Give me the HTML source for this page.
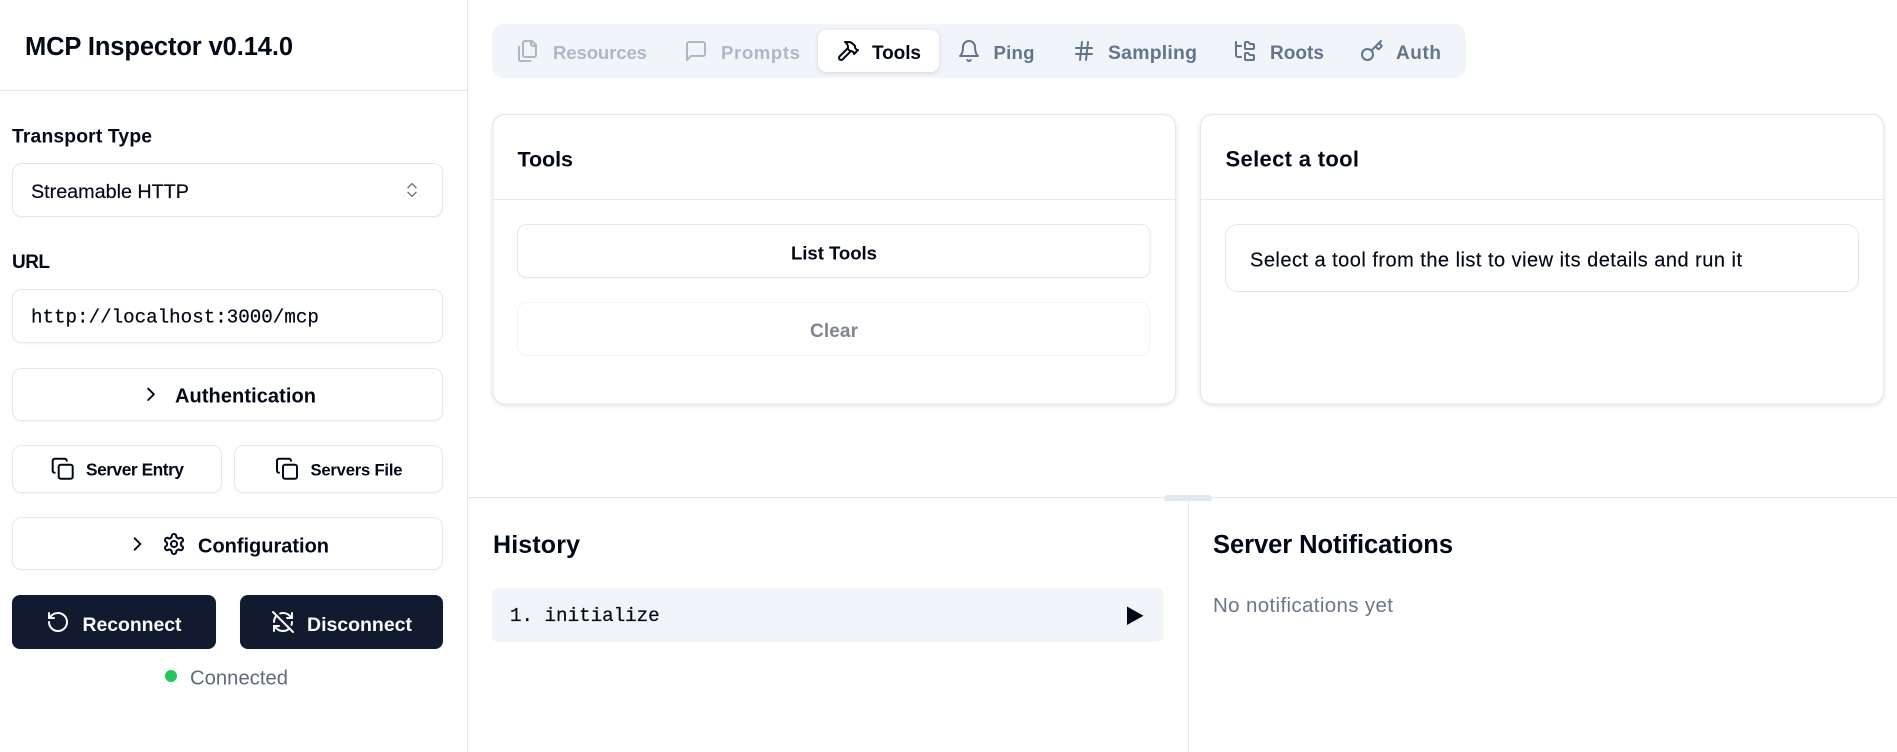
<!DOCTYPE html>
<html lang="en"><head><meta charset="utf-8"><title>MCP Inspector</title>
<style>
html,body{margin:0;padding:0;background:#fff;width:1897px;height:752px;overflow:hidden}
svg{display:block}
text{font-family:"Liberation Sans",sans-serif;white-space:pre}
.m{font-weight:700}
.r{stroke:currentColor;stroke-width:.15px}
.mono{font-family:"Liberation Mono",monospace;stroke:currentColor;stroke-width:.2px}
.b{fill:#fff;stroke:#e2e8f0;stroke-width:1}
.s{filter:drop-shadow(0 1px 1px rgba(15,23,42,.04))}
.c{filter:drop-shadow(0 1px 2px rgba(15,23,42,.12))}
.i{fill:none;stroke:currentColor;stroke-width:2;stroke-linecap:round;stroke-linejoin:round}
</style></head><body>
<svg width="1897" height="752" viewBox="0 0 1897 752" xmlns="http://www.w3.org/2000/svg">
<rect width="1897" height="752" fill="#fff"/>
<!-- structure lines -->
<rect x="467" y="0" width="1" height="752" fill="#e2e8f0"/>
<rect x="0" y="90" width="467" height="1" fill="#e2e8f0"/>
<rect x="468" y="497" width="1429" height="1" fill="#e2e8f0"/>
<rect x="1188" y="498" width="1" height="254" fill="#e2e8f0"/>
<rect x="1164" y="495" width="48" height="6" rx="3" fill="#e2e8f0"/>

<!-- sidebar -->
<text x="25" y="55" font-size="25.5" fill="#020817" class="m" textLength="268" lengthAdjust="spacing">MCP Inspector v0.14.0</text>
<text x="12" y="142.3" font-size="19.3" fill="#020817" class="m" textLength="140" lengthAdjust="spacing">Transport Type</text>
<rect x="12.5" y="163.5" width="430" height="53" rx="9" class="b s"/>
<text x="31" y="198" font-size="19.8" fill="#020817" color="#020817" class="r" textLength="158" lengthAdjust="spacing">Streamable HTTP</text>
<g class="i" color="#020817" opacity=".55" style="stroke-width:1.8" transform="translate(402.4 180.4) scale(.8)"><path d="m7 15 5 5 5-5"/><path d="m7 9 5-5 5 5"/></g>
<text x="12" y="268" font-size="19" fill="#020817" class="m" textLength="38" lengthAdjust="spacing">URL</text>
<rect x="12.5" y="289.5" width="430" height="53" rx="9" class="b s"/>
<text x="31" y="322.3" font-size="19.2" class="mono" fill="#020817" color="#020817">http://localhost:3000/mcp</text>

<rect x="12.5" y="368.5" width="430" height="52" rx="9" class="b s"/>
<g class="i" color="#020817" transform="translate(139.6 382.9) scale(.95)"><path d="m9 18 6-6-6-6"/></g>
<text x="175" y="402.5" font-size="20" fill="#020817" class="m" textLength="141" lengthAdjust="spacing">Authentication</text>

<rect x="12.5" y="445.5" width="209" height="47" rx="9" class="b s"/>
<g class="i" color="#020817" transform="translate(50.7 456.7)"><rect width="14" height="14" x="8" y="8" rx="2" ry="2"/><path d="M4 16c-1.1 0-2-.9-2-2V4c0-1.1.9-2 2-2h10c1.1 0 2 .9 2 2"/></g>
<text x="86" y="475.6" font-size="17.3" fill="#020817" class="m" textLength="98" lengthAdjust="spacing">Server Entry</text>
<rect x="234.5" y="445.5" width="208" height="47" rx="9" class="b s"/>
<g class="i" color="#020817" transform="translate(275 456.7)"><rect width="14" height="14" x="8" y="8" rx="2" ry="2"/><path d="M4 16c-1.1 0-2-.9-2-2V4c0-1.1.9-2 2-2h10c1.1 0 2 .9 2 2"/></g>
<text x="310.5" y="475.6" font-size="16.6" fill="#020817" class="m" textLength="92" lengthAdjust="spacing">Servers File</text>

<rect x="12.5" y="517.5" width="430" height="52" rx="9" class="b s"/>
<g class="i" color="#020817" transform="translate(126.1 532.6) scale(.95)"><path d="m9 18 6-6-6-6"/></g>
<g class="i" color="#020817" transform="translate(162 532)"><path d="M12.22 2h-.44a2 2 0 0 0-2 2v.18a2 2 0 0 1-1 1.73l-.43.25a2 2 0 0 1-2 0l-.15-.08a2 2 0 0 0-2.73.73l-.22.38a2 2 0 0 0 .73 2.73l.15.1a2 2 0 0 1 1 1.72v.51a2 2 0 0 1-1 1.74l-.15.09a2 2 0 0 0-.73 2.73l.22.38a2 2 0 0 0 2.73.73l.15-.08a2 2 0 0 1 2 0l.43.25a2 2 0 0 1 1 1.73V20a2 2 0 0 0 2 2h.44a2 2 0 0 0 2-2v-.18a2 2 0 0 1 1-1.73l.43-.25a2 2 0 0 1 2 0l.15.08a2 2 0 0 0 2.73-.73l.22-.39a2 2 0 0 0-.73-2.73l-.15-.08a2 2 0 0 1-1-1.74v-.5a2 2 0 0 1 1-1.74l.15-.09a2 2 0 0 0 .73-2.73l-.22-.38a2 2 0 0 0-2.73-.73l-.15.08a2 2 0 0 1-2 0l-.43-.25a2 2 0 0 1-1-1.73V4a2 2 0 0 0-2-2z"/><circle cx="12" cy="12" r="3"/></g>
<text x="198" y="552.5" font-size="20" fill="#020817" class="m" textLength="131" lengthAdjust="spacing">Configuration</text>

<rect x="12" y="595" width="204" height="54" rx="8" fill="#111a2e" class="s"/>
<g class="i" color="#f8fafc" transform="translate(46 610)"><path d="M3 12a9 9 0 1 0 9-9 9.75 9.75 0 0 0-6.74 2.74L3 8"/><path d="M3 3v5h5"/></g>
<text x="82.5" y="630.8" font-size="19.4" fill="#f8fafc" class="m" textLength="99" lengthAdjust="spacing">Reconnect</text>
<rect x="240" y="595" width="203" height="54" rx="8" fill="#111a2e" class="s"/>
<g class="i" color="#f8fafc" transform="translate(271 610)"><path d="M21 8L18.74 5.74A9.75 9.75 0 0 0 12 3C11 3 10.03 3.16 9.13 3.47"/><path d="M8 16H3v5"/><path d="M3 12C3 9.51 4 7.26 5.64 5.64"/><path d="m3 16 2.26 2.26A9.75 9.75 0 0 0 12 21c2.49 0 4.74-1 6.36-2.64"/><path d="M21 12c0 1-.16 1.97-.47 2.87"/><path d="M21 3v5h-5"/><path d="M22 22 2 2"/></g>
<text x="307" y="630.8" font-size="19.5" fill="#f8fafc" class="m" textLength="105" lengthAdjust="spacing">Disconnect</text>
<circle cx="171" cy="676" r="6" fill="#22c55e"/>
<text x="190" y="684.5" font-size="20.2" fill="#5f6a7c" color="#5f6a7c" textLength="98" lengthAdjust="spacing">Connected</text>

<!-- tabs -->
<rect x="492" y="24" width="974" height="54" rx="12" fill="#f1f5f9"/>
<rect x="818" y="30" width="121" height="42" rx="8" fill="#fff" style="filter:drop-shadow(0 1px 2px rgba(15,23,42,.14))"/>
<g class="i" color="#adb8c7" transform="translate(516 39)"><path d="M20 7h-3a2 2 0 0 1-2-2V2"/><path d="M9 18a2 2 0 0 1-2-2V4a2 2 0 0 1 2-2h7l4 4v10a2 2 0 0 1-2 2Z"/><path d="M3 7.6v12.8A1.6 1.6 0 0 0 4.6 22h9.8"/></g>
<text x="553" y="59.2" font-size="18.6" fill="#adb8c7" class="m" textLength="94" lengthAdjust="spacing">Resources</text>
<g class="i" color="#adb8c7" transform="translate(684 39)"><path d="M21 15a2 2 0 0 1-2 2H7l-4 4V5a2 2 0 0 1 2-2h14a2 2 0 0 1 2 2z"/></g>
<text x="721" y="59.2" font-size="18.6" fill="#adb8c7" class="m" textLength="79" lengthAdjust="spacing">Prompts</text>
<g class="i" color="#020817" transform="translate(836 39)"><path d="m15 12-8.373 8.373a1 1 0 1 1-3-3L12 9"/><path d="m18 15 4-4"/><path d="m21.5 11.5-1.914-1.914A2 2 0 0 1 19 8.172V7l-2.26-2.26a6 6 0 0 0-4.202-1.756L9 2.96l.92.82A6.18 6.18 0 0 1 12 8.4V10l2 2h1.172a2 2 0 0 1 1.414.586L18.5 14.5"/></g>
<text x="872" y="59.2" font-size="19" fill="#020817" class="m" textLength="49" lengthAdjust="spacing">Tools</text>
<g class="i" color="#64748b" transform="translate(957 39)"><path d="M6 8a6 6 0 0 1 12 0c0 7 3 9 3 9H3s3-2 3-9"/><path d="M10.3 21a1.94 1.94 0 0 0 3.4 0"/></g>
<text x="993.5" y="59.2" font-size="18.6" fill="#64748b" class="m" textLength="41" lengthAdjust="spacing">Ping</text>
<g class="i" color="#64748b" transform="translate(1072 39)"><line x1="4" x2="20" y1="9" y2="9"/><line x1="4" x2="20" y1="15" y2="15"/><line x1="10" x2="8" y1="3" y2="21"/><line x1="16" x2="14" y1="3" y2="21"/></g>
<text x="1108" y="59.2" font-size="19.4" fill="#64748b" class="m" textLength="89" lengthAdjust="spacing">Sampling</text>
<g class="i" color="#64748b" transform="translate(1233 39)"><path d="M20 10a1 1 0 0 0 1-1V6a1 1 0 0 0-1-1h-2.5a1 1 0 0 1-.8-.4l-.9-1.2A1 1 0 0 0 15 3h-2a1 1 0 0 0-1 1v5a1 1 0 0 0 1 1Z"/><path d="M20 21a1 1 0 0 0 1-1v-3a1 1 0 0 0-1-1h-2.9a1 1 0 0 1-.88-.55l-.42-.85a1 1 0 0 0-.92-.6H13a1 1 0 0 0-1 1v5a1 1 0 0 0 1 1Z"/><path d="M3 5a2 2 0 0 0 2 2h3"/><path d="M3 3v13a2 2 0 0 0 2 2h3"/></g>
<text x="1270" y="59.2" font-size="19" fill="#64748b" class="m" textLength="54" lengthAdjust="spacing">Roots</text>
<g class="i" color="#64748b" transform="translate(1360 39)"><path d="m15.5 7.5 2.3 2.3a1 1 0 0 0 1.4 0l2.1-2.1a1 1 0 0 0 0-1.4L19 4"/><path d="m21 2-9.6 9.6"/><circle cx="7.5" cy="15.5" r="5.5"/></g>
<text x="1396" y="59.2" font-size="19" fill="#64748b" class="m" textLength="45" lengthAdjust="spacing">Auth</text>

<!-- tools card -->
<rect x="493" y="114.5" width="682.5" height="289.5" rx="12" class="b c"/>
<rect x="493" y="199" width="682.5" height="1" fill="#e2e8f0"/>
<text x="517.5" y="166.5" font-size="21.5" fill="#020817" class="m" textLength="55.5" lengthAdjust="spacing">Tools</text>
<rect x="517.5" y="224.5" width="632.5" height="53" rx="9" class="b s"/>
<text x="791" y="259.3" font-size="18.6" fill="#020817" class="m" textLength="86" lengthAdjust="spacing">List Tools</text>
<rect x="517.5" y="302.5" width="632.5" height="53" rx="9" fill="#fff" stroke="#f1f4f8"/>
<text x="810" y="337.2" font-size="19" fill="#81858f" class="m" textLength="48" lengthAdjust="spacing">Clear</text>

<!-- select card -->
<rect x="1200.5" y="114.5" width="683" height="289.5" rx="12" class="b c"/>
<rect x="1200.5" y="199" width="683" height="1" fill="#e2e8f0"/>
<text x="1225.5" y="166.5" font-size="22" fill="#020817" class="m" textLength="133.5" lengthAdjust="spacing">Select a tool</text>
<rect x="1225.5" y="224.5" width="633" height="67" rx="12" class="b"/>
<text x="1250" y="266.7" font-size="20" fill="#020817" color="#020817" class="r" textLength="492" lengthAdjust="spacing">Select a tool from the list to view its details and run it</text>

<!-- history -->
<text x="493" y="553" font-size="25" fill="#020817" class="m" textLength="87" lengthAdjust="spacing">History</text>
<rect x="492" y="588" width="671.5" height="54" rx="6" fill="#f1f5f9"/>
<text x="510" y="620.8" font-size="19.2" class="mono" fill="#020817" color="#020817">1. initialize</text>
<path d="M1127 606.5 L1143.5 615.7 L1127 625 Z" fill="#020817"/>

<!-- notifications -->
<text x="1213" y="553" font-size="25.5" fill="#020817" class="m" textLength="240" lengthAdjust="spacing">Server Notifications</text>
<text x="1213" y="611.9" font-size="20.5" fill="#6b7686" textLength="180" lengthAdjust="spacing">No notifications yet</text>
</svg>
</body></html>
